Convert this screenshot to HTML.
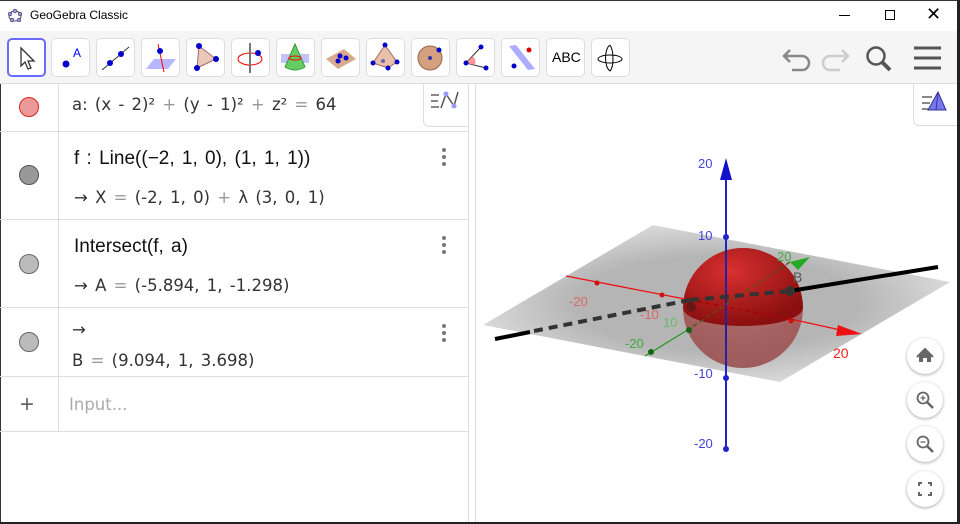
<!DOCTYPE html>
<html><head><meta charset="utf-8"><style>
*{box-sizing:border-box;margin:0;padding:0}
body{width:960px;height:524px;overflow:hidden;background:#fff;font-family:"Liberation Sans",sans-serif;position:relative}
.abs{position:absolute}
.tb{position:absolute;top:38px;width:39px;height:39px;border:1px solid #ddd;border-radius:5px;background:#fff}
.t{position:absolute;font-size:17px;color:#333;white-space:nowrap}
.v{font-family:"DejaVu Sans",sans-serif;font-size:16.5px;word-spacing:2px}
.hl{position:absolute;height:1px;background:#ddd}
.dot{position:absolute;width:20px;height:20px;border-radius:50%;border:1px solid #555}
.menu{position:absolute;width:4px}
.menu i{display:block;width:4px;height:4px;border-radius:50%;background:#777;margin-bottom:3px}
.fb{position:absolute;width:36px;height:36px;border-radius:50%;background:#fff;box-shadow:0 1px 3px rgba(0,0,0,.35)}
</style></head><body>
<div class="abs" style="left:0;top:0;width:960px;height:31px;background:#fff;border-top:1px solid #333"></div>
<svg class="abs" style="left:7px;top:8px" width="16" height="16"><ellipse cx="8" cy="8" rx="6" ry="5" fill="none" stroke="#555"/><g fill="#99f" stroke="#333" stroke-width=".6"><circle cx="3" cy="6" r="1.8"/><circle cx="8" cy="3" r="1.8"/><circle cx="13" cy="6" r="1.8"/><circle cx="12" cy="12" r="1.8"/><circle cx="5" cy="12" r="1.8"/></g></svg>
<div class="t" style="left:30px;top:8px;font-size:12px;color:#000">GeoGebra Classic</div>
<div class="abs" style="left:839px;top:15px;width:11px;height:1px;background:#000"></div>
<div class="abs" style="left:885px;top:10px;width:10px;height:10px;border:1px solid #000"></div>
<div class="t" style="left:926px;top:4px;font-size:18px;color:#000">✕</div>
<div class="abs" style="left:0;top:31px;width:960px;height:53px;background:#f5f5f5;border-bottom:1px solid #ddd"></div>
<div class="tb" style="left:7px;border:2px solid #6b6bff"><svg width="35" height="35"><path d="M12 8 L12 26 L16 22 L19 29 L22 28 L19 21 L25 21 Z" fill="#fff" stroke="#333" stroke-width="1.3"/></svg></div>
<div class="tb" style="left:51px"><svg width="37" height="37"><circle cx="14" cy="25" r="3.5" fill="#00c"/><text x="21" y="18" font-size="12" fill="#00f" font-family="Liberation Sans">A</text></svg></div>
<div class="tb" style="left:96px"><svg width="37" height="37"><path d="M5 31 L32 8" stroke="#333"/><circle cx="13" cy="24" r="3" fill="#00c"/><circle cx="24" cy="15" r="3" fill="#00c"/></svg></div>
<div class="tb" style="left:141px"><svg width="37" height="37"><path d="M4 30 L12 20 L34 20 L26 30Z" fill="#99f" opacity=".7"/><path d="M16 5 L22 33" stroke="red"/><circle cx="18" cy="12" r="3" fill="#00c"/></svg></div>
<div class="tb" style="left:186px"><svg width="37" height="37"><path d="M12 7 L29 20 L10 29Z" fill="#e8c8b8" stroke="#a66"/><circle cx="12" cy="7" r="3" fill="#00c"/><circle cx="29" cy="20" r="3" fill="#00c"/><circle cx="10" cy="29" r="3" fill="#00c"/></svg></div>
<div class="tb" style="left:231px"><svg width="37" height="37"><ellipse cx="18" cy="20" rx="12" ry="6" fill="none" stroke="red"/><path d="M18 4 L18 34" stroke="#777" stroke-width="2"/><circle cx="26" cy="14" r="3" fill="#00c"/></svg></div>
<div class="tb" style="left:276px"><svg width="37" height="37"><path d="M4 15 L32 15 L32 24 L4 24Z" fill="#99f" opacity=".6"/><path d="M18 5 L8 28 Q18 34 28 28Z" fill="#6c6" stroke="#393"/><ellipse cx="18" cy="19" rx="6" ry="2" fill="none" stroke="red"/></svg></div>
<div class="tb" style="left:321px"><svg width="37" height="37"><path d="M4 20 L22 10 L34 20 L16 30Z" fill="#d9a98f"/><circle cx="18" cy="17" r="2.5" fill="#00c"/><circle cx="24" cy="19" r="2.5" fill="#00c"/><circle cx="16" cy="22" r="2.5" fill="#00c"/></svg></div>
<div class="tb" style="left:366px"><svg width="37" height="37"><path d="M18 6 L6 24 L21 29 L30 23Z" fill="#e8c0a8" stroke="#a66"/><circle cx="18" cy="6" r="2.5" fill="#00c"/><circle cx="6" cy="24" r="2.5" fill="#00c"/><circle cx="21" cy="29" r="2.5" fill="#00c"/><circle cx="30" cy="23" r="2.5" fill="#00c"/><circle cx="16" cy="22" r="2" fill="#66a"/></svg></div>
<div class="tb" style="left:411px"><svg width="37" height="37"><circle cx="18" cy="19" r="12" fill="#d4a080" stroke="#964"/><circle cx="18" cy="19" r="2" fill="#33a"/><circle cx="27" cy="11" r="2.5" fill="#00c"/></svg></div>
<div class="tb" style="left:456px"><svg width="37" height="37"><path d="M24 8 L9 24 L29 29" fill="none" stroke="#333"/><path d="M9 24 L16 17 A9 9 0 0 1 18 26Z" fill="#f99"/><circle cx="24" cy="8" r="2.5" fill="#00c"/><circle cx="9" cy="24" r="2.5" fill="#00c"/><circle cx="29" cy="29" r="2.5" fill="#00c"/></svg></div>
<div class="tb" style="left:501px"><svg width="37" height="37"><path d="M7 7 L14 6 L33 30 L26 31Z" fill="#99f" opacity=".8"/><circle cx="27" cy="11" r="2.5" fill="#d00"/><circle cx="12" cy="27" r="2.5" fill="#00c"/></svg></div>
<div class="tb" style="left:546px"><div class="t" style="left:5px;top:10px;font-size:14px;color:#000">ABC</div></div>
<div class="tb" style="left:591px"><svg width="37" height="37"><ellipse cx="18" cy="20" rx="12" ry="4" fill="none" stroke="#000"/><path d="M18 6 C12 10 12 28 18 32 C22 28 22 12 18 6" fill="none" stroke="#000"/></svg></div>
<svg class="abs" style="left:780px;top:42px" width="170" height="34"><path d="M10 8 L4 14 L10 20 M4 14 L22 14 A7 7 0 0 1 22 28 L12 28" fill="none" stroke="#888" stroke-width="2.5"/><path d="M62 8 L68 14 L62 20 M68 14 L50 14 A7 7 0 0 0 50 28 L60 28" fill="none" stroke="#ccc" stroke-width="2.5"/><circle cx="96" cy="14" r="8.5" fill="none" stroke="#555" stroke-width="2.5"/><path d="M102 20 L110 28" stroke="#555" stroke-width="4"/><path d="M134 6 H161 M134 16 H161 M134 26 H161" stroke="#555" stroke-width="3"/></svg>
<div class="abs" style="left:0;top:84px;width:1px;height:440px;background:#333"></div>
<div class="abs" style="left:58px;top:84px;width:1px;height:347px;background:#ddd"></div>
<div class="abs" style="left:468px;top:84px;width:1px;height:440px;background:#ddd"></div>
<div class="abs" style="left:475px;top:84px;width:1px;height:440px;background:#ddd"></div>
<div class="abs" style="left:957px;top:0;width:3px;height:524px;background:#222"></div>
<div class="hl" style="left:0;top:131px;width:468px"></div>
<div class="hl" style="left:0;top:219px;width:468px"></div>
<div class="hl" style="left:0;top:307px;width:468px"></div>
<div class="hl" style="left:0;top:376px;width:468px"></div>
<div class="hl" style="left:0;top:431px;width:468px"></div>
<div class="abs" style="left:0;top:522px;width:960px;height:2px;background:#222"></div>
<div class="dot" style="left:19px;top:97px;background:#ec9999;border-color:#d22"></div>
<div class="t v" style="left:72px;top:95px">a: (x - 2)² <span style="color:#999">+</span> (y - 1)² <span style="color:#999">+</span> z² <span style="color:#999">=</span> 64</div>
<div class="abs" style="left:423px;top:84px;width:45px;height:43px;background:#fff;border:1px solid #ddd;border-top:none;border-right:none;border-radius:0 0 0 6px"><svg width="44" height="42"><path d="M7 11H15M7 17H14M7 23H15" stroke="#888" stroke-width="2"/><path d="M17 24 L22 10 L30 22 L34 8" fill="none" stroke="#555" stroke-width="1.5"/><circle cx="22" cy="10" r="2.5" fill="#99f"/><circle cx="30" cy="22" r="2.5" fill="#99f"/></svg></div>
<div class="dot" style="left:19px;top:165px;background:#999"></div>
<div class="t" style="left:74px;top:148px;font-size:19px;color:#111;word-spacing:2px">f : Line((−2, 1, 0), (1, 1, 1))</div>
<div class="t v" style="left:74px;top:188px">→ X <span style="color:#999">=</span> (-2, 1, 0) <span style="color:#999">+</span> λ (3, 0, 1)</div>
<div class="menu" style="left:442px;top:148px"><i></i><i></i><i></i></div>
<div class="dot" style="left:19px;top:254px;background:#bbb;border-color:#666"></div>
<div class="t" style="left:74px;top:236px;font-size:19px;color:#111;word-spacing:2px">Intersect(f, a)</div>
<div class="t v" style="left:74px;top:276px">→ A <span style="color:#999">=</span> (-5.894, 1, -1.298)</div>
<div class="menu" style="left:442px;top:236px"><i></i><i></i><i></i></div>
<div class="dot" style="left:19px;top:332px;background:#bbb;border-color:#666"></div>
<div class="t v" style="left:72px;top:320px">→</div>
<div class="t v" style="left:72px;top:351px">B <span style="color:#999">=</span> (9.094, 1, 3.698)</div>
<div class="menu" style="left:442px;top:324px"><i></i><i></i><i></i></div>
<div class="t" style="left:20px;top:391px;font-size:24px;color:#666;font-weight:300">+</div>
<div class="t v" style="left:69px;top:395px;color:#aaa">Input...</div>
<div class="abs" style="left:913px;top:84px;width:44px;height:42px;background:#fff;border:1px solid #ddd;border-top:none;border-right:none;border-radius:0 0 0 6px"><svg width="44" height="42"><path d="M8 13H18M8 19H16M8 25H16" stroke="#888" stroke-width="2"/><path d="M24 8 L14 26 L32 26Z" fill="#77e" stroke="#339"/><path d="M24 8 L22 26" stroke="#339"/></svg></div>
<svg class="abs" style="left:476px;top:84px" width="481" height="438" viewBox="476 84 481 438">
<defs><radialGradient id="pl" cx=".5" cy=".5" r=".6"><stop offset=".5" stop-color="#b5b5b5"/><stop offset="1" stop-color="#e8e8e8"/></radialGradient>
<radialGradient id="sp" cx=".4" cy=".3" r=".7"><stop offset="0" stop-color="#d83030"/><stop offset="1" stop-color="#8a0f0f"/></radialGradient>
<radialGradient id="sp2" cx=".5" cy=".3" r=".7"><stop offset="0" stop-color="#b76868"/><stop offset="1" stop-color="#9a5050"/></radialGradient></defs>
<path d="M483 325 L653 225 L950 282 L780 382Z" fill="url(#pl)"/>
<circle cx="743" cy="308" r="60" fill="url(#sp2)" opacity=".9"/>
<path d="M683 308 A60 60 0 0 1 803 308 A60 18 0 0 1 683 308Z" fill="url(#sp)"/>
<path d="M726 170 L726 450" stroke="#22c" stroke-width="2"/>
<path d="M726 250 L726 365" stroke="#227" stroke-width="1.5" stroke-dasharray="5 3"/>
<path d="M720 180 L726 158 L732 180Z" fill="#11c"/>
<circle cx="726" cy="237" r="3" fill="#22c"/><circle cx="726" cy="378" r="3" fill="#22c"/><circle cx="726" cy="449" r="3" fill="#22c"/>
<path d="M566 276 L690 300" stroke="#e11" stroke-width="1.3"/>
<path d="M690 300 L795 320" stroke="#a00" stroke-width="1.3" stroke-dasharray="5 3"/>
<path d="M795 320 L845 331" stroke="#e11" stroke-width="1.3"/>
<path d="M838 325 L862 334 L836 336Z" fill="#e11"/>
<circle cx="597" cy="283" r="2.5" fill="#c11"/><circle cx="662" cy="295" r="2.5" fill="#c11"/><circle cx="791" cy="321" r="2.5" fill="#c11"/>
<path d="M645 356 L686 331" stroke="#292" stroke-width="1.3"/>
<path d="M686 331 L790 262" stroke="#551" stroke-width="1.3" stroke-dasharray="5 3"/>
<path d="M790 262 L810 257 L798 270Z" fill="#2a2"/>
<circle cx="651" cy="352" r="3" fill="#161"/><circle cx="689" cy="330" r="3" fill="#161"/>
<path d="M495 339 L530 332" stroke="#000" stroke-width="4"/>
<path d="M534 331 L690 300 M690 300 L790 291" stroke="#333" stroke-width="4" stroke-dasharray="9 6"/>
<path d="M790 291 L938 267" stroke="#000" stroke-width="4"/>
<circle cx="691" cy="307" r="5" fill="#6a1515"/><circle cx="790" cy="291" r="5" fill="#333"/>
<g font-family="Liberation Sans" font-size="13">
<text x="698" y="168" fill="#44d">20</text><text x="698" y="240" fill="#44d">10</text>
<text x="694" y="378" fill="#44d">-10</text><text x="694" y="448" fill="#44d">-20</text>
<text x="569" y="306" fill="#d66">-20</text><text x="833" y="358" fill="#e22" font-size="14">20</text>
<text x="625" y="348" fill="#4a4">-20</text><text x="777" y="261" fill="#4a4">20</text>
<text x="793" y="282" fill="#555" font-size="14">B</text>
<text x="640" y="319" fill="#d66">-10</text><text x="663" y="327" fill="#6b6">10</text>
</g>
</svg>
<div class="fb" style="left:907px;top:338px"><svg width="36" height="36"><path d="M12 18 L18 12 L24 18 L24 24 L20 24 L20 20 L16 20 L16 24 L12 24Z" fill="#666"/><path d="M10 19 L18 11 L26 19" fill="none" stroke="#666" stroke-width="2"/></svg></div>
<div class="fb" style="left:907px;top:382px"><svg width="36" height="36"><circle cx="16" cy="16" r="5.5" fill="none" stroke="#666" stroke-width="1.8"/><path d="M20 20 L26 26" stroke="#666" stroke-width="2.5"/><path d="M13.5 16H18.5M16 13.5V18.5" stroke="#666" stroke-width="1.3"/></svg></div>
<div class="fb" style="left:907px;top:426px"><svg width="36" height="36"><circle cx="16" cy="16" r="5.5" fill="none" stroke="#666" stroke-width="1.8"/><path d="M20 20 L26 26" stroke="#666" stroke-width="2.5"/><path d="M13.5 16H18.5" stroke="#666" stroke-width="1.3"/></svg></div>
<div class="fb" style="left:907px;top:471px"><svg width="36" height="36"><path d="M12 15V12H15M21 12H24V15M24 21V24H21M15 24H12V21" fill="none" stroke="#666" stroke-width="2"/></svg></div>
</body></html>
